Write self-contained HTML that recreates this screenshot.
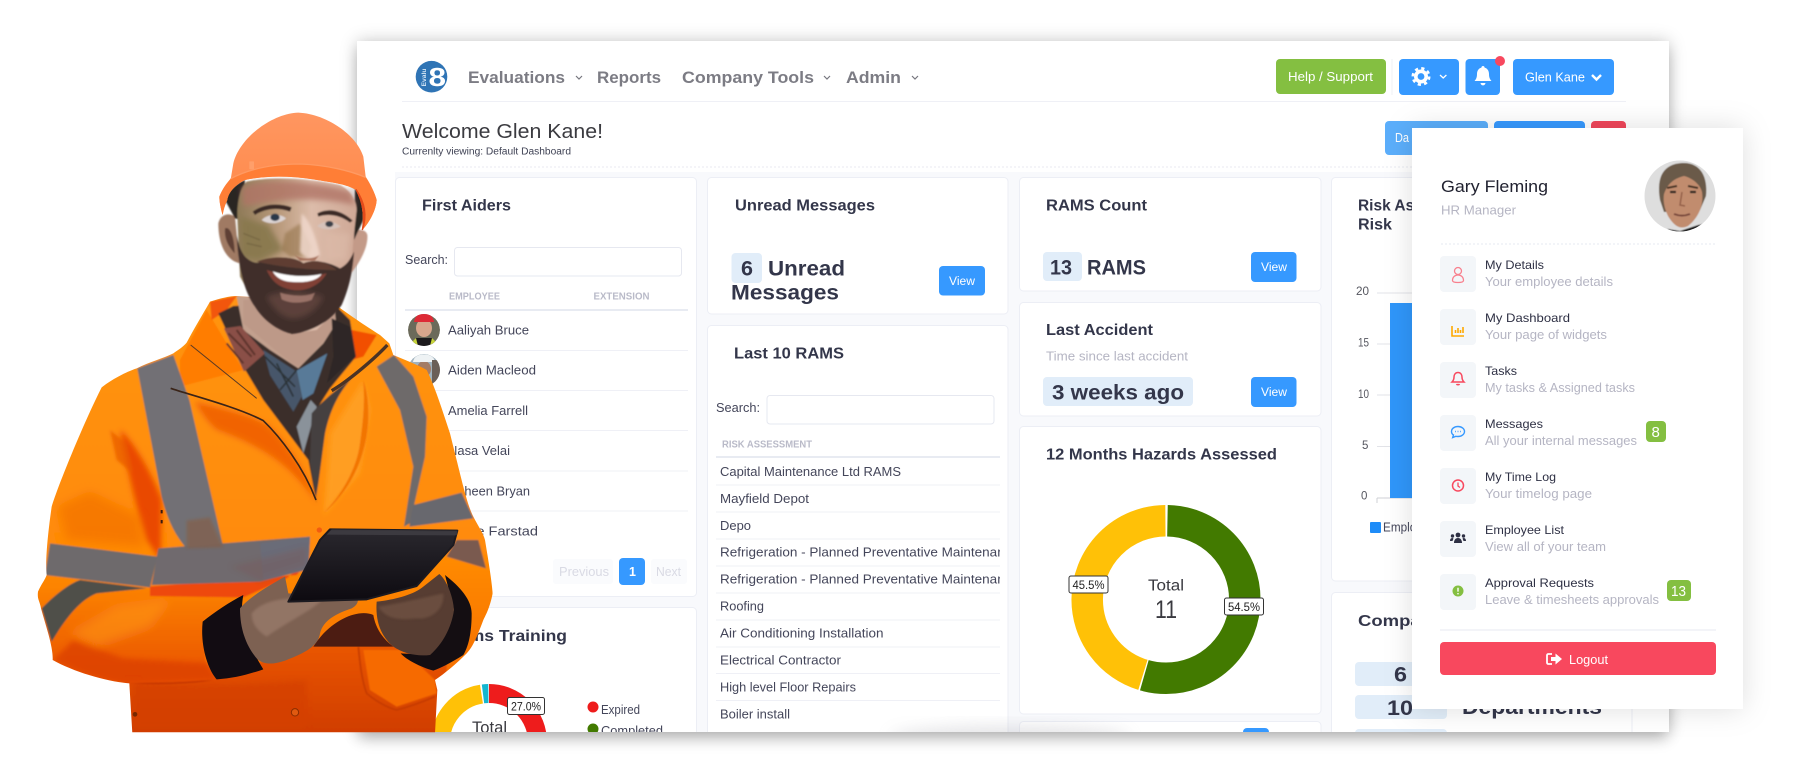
<!DOCTYPE html>
<html><head><meta charset="utf-8"><title>Evalu8</title>
<style>
html,body{margin:0;padding:0;background:#fff;width:1796px;height:774px;overflow:hidden}
#panel{position:absolute;left:357px;top:41px;width:1312px;height:691px;background:#fff;box-shadow:0 9px 14px -2px rgba(0,0,0,.2),0 0 16px rgba(0,0,0,.22)}
#s{position:absolute;left:0;top:0}
text{font-family:"Liberation Sans",sans-serif;fill:#3f4254}
.n{font-size:16.5px;font-weight:700;fill:#7c7c84}
.t{font-size:15.5px;font-weight:700;fill:#33364a}
.c{font-size:12.5px;fill:#44465a}
.th{font-size:10px;font-weight:700;fill:#b9bac8}
.b{font-size:21px;font-weight:700;fill:#33364a}
.w{font-size:12.5px;fill:#fff}
.pt{font-size:12px;fill:#2e3044}
.ps{font-size:12.5px;fill:#b5b5c3}
.l{stroke:#eff0f6;stroke-width:1;fill:none}
.card{fill:#fff;stroke:#eceef5;stroke-width:1}
.tip{fill:#fff;stroke:#333;stroke-width:1}
</style></head><body>
<div id="panel"></div>
<svg id="s" width="1796" height="774" viewBox="0 0 1796 774" xmlns="http://www.w3.org/2000/svg">
<defs>
<clipPath id="pc"><rect x="357" y="41" width="1312" height="691"/></clipPath>
<clipPath id="rc"><rect x="716" y="440" width="284" height="292"/></clipPath>
<clipPath id="gc"><circle cx="1680" cy="196" r="35.5"/></clipPath>
<clipPath id="a1"><circle cx="424" cy="330" r="16"/></clipPath>
<clipPath id="a2"><circle cx="424" cy="370" r="16"/></clipPath>
<clipPath id="manc"><rect x="0" y="0" width="600" height="732.3"/></clipPath>
<clipPath id="silc"><path d="M307 1300L298 1150C230 1145 130 1115 68 1080 70 1040 45 970 33 925 30 905 20 895 24 875 35 850 45 840 50 825 45 780 55 690 65 620 90 540 170 350 215 262 250 235 290 215 320 205 360 185 400 175 430 160 445 150 460 140 470 128 490 90 520 40 540 5 570-5 600-12 620-12L905 5C950 40 1010 80 1050 105L1078 130 1090 165C1125 180 1165 195 1190 210 1215 260 1240 340 1260 400 1275 460 1290 520 1300 560 1310 600 1320 630 1330 650 1345 680 1360 700 1365 720 1375 780 1385 840 1388 880 1380 920 1370 940 1360 960 1345 1000 1330 1040 1310 1060 1280 1090 1245 1120 1215 1140L1222 1170 1215 1300Z"/></clipPath>
<clipPath id="headc"><path d="M55 370C60 345 85 335 105 350L115 330 470 300 500 395C505 430 480 490 450 525 440 590 400 670 290 702 200 690 130 590 110 480 80 475 55 430 55 370Z"/></clipPath>
<filter id="bl8" x="-40%" y="-40%" width="180%" height="180%"><feGaussianBlur stdDeviation="8"/></filter>
<filter id="bl14" x="-40%" y="-40%" width="180%" height="180%"><feGaussianBlur stdDeviation="14"/></filter>
<filter id="bl4" x="-40%" y="-40%" width="180%" height="180%"><feGaussianBlur stdDeviation="4"/></filter>
<filter id="bl2" x="-10%" y="-10%" width="120%" height="120%"><feGaussianBlur stdDeviation="2"/></filter>
<filter id="bl06" x="-10%" y="-10%" width="120%" height="120%"><feGaussianBlur stdDeviation=".6"/></filter>
<filter id="ps" x="-10%" y="-10%" width="125%" height="125%"><feDropShadow dx="0" dy="0" stdDeviation="14" flood-color="#000" flood-opacity=".13"/></filter>
<linearGradient id="jk" x1="0" y1="0" x2="0" y2="1"><stop offset="0" stop-color="#ff9412"/><stop offset=".6" stop-color="#ff8a06"/><stop offset="1" stop-color="#f06000"/></linearGradient>
<linearGradient id="hem" x1="0" y1="0" x2="0" y2="1"><stop offset="0" stop-color="#ea5600"/><stop offset="1" stop-color="#cf3c00"/></linearGradient>
<linearGradient id="arm" x1="0" y1="0" x2="0" y2="1"><stop offset="0" stop-color="#fb8006"/><stop offset="1" stop-color="#e85000"/></linearGradient>
<linearGradient id="tab" x1="0" y1="0" x2="0" y2="1"><stop offset="0" stop-color="#2a282e"/><stop offset="1" stop-color="#0d0a10"/></linearGradient>
<linearGradient id="hel" x1="0" y1="0" x2="0" y2="1"><stop offset="0" stop-color="#ff9660"/><stop offset="1" stop-color="#ff8745"/></linearGradient>
<linearGradient id="fc" x1="0" y1="0" x2="1" y2="0"><stop offset="0" stop-color="#8e7a58"/><stop offset=".35" stop-color="#b99a7c"/><stop offset=".62" stop-color="#dcbcaa"/><stop offset="1" stop-color="#cfa896"/></linearGradient>
</defs>

<g clip-path="url(#pc)">
<rect x="395" y="172" width="1237" height="560" fill="#f8f9fc"/>
<!-- header -->
<circle cx="431.5" cy="76.7" r="15.8" fill="#2f74b5"/>
<text x="0" y="0" transform="translate(426,86.500) rotate(-90)" style="font-size:6.500px;font-weight:700;fill:#d5e6f5" textLength="18" lengthAdjust="spacingAndGlyphs">Evalu</text>
<text x="428.500" y="86" style="font-size:26px;font-weight:700;fill:#fff" textLength="17.500" lengthAdjust="spacingAndGlyphs">8</text>
<text class="n" x="468" y="83" textLength="97" lengthAdjust="spacingAndGlyphs">Evaluations</text>
<text class="n" x="597" y="83" textLength="64" lengthAdjust="spacingAndGlyphs">Reports</text>
<text class="n" x="682" y="83" textLength="132" lengthAdjust="spacingAndGlyphs">Company Tools</text>
<text class="n" x="846" y="83" textLength="55" lengthAdjust="spacingAndGlyphs">Admin</text>
<g fill="none" stroke="#76767e" stroke-width="1.2"><path d="M576 76l3 3 3-3"/><path d="M824 76l3 3 3-3"/><path d="M912 76l3 3 3-3"/></g>
<rect x="1276" y="59" width="110" height="35" rx="4" fill="#84bf41"/>
<text class="w" x="1288" y="81" textLength="85" lengthAdjust="spacingAndGlyphs">Help / Support</text>
<path d="M1392 59v36" stroke="#eff0f6"/>
<rect x="1399" y="59" width="60" height="36" rx="4" fill="#3699ff"/>
<circle cx="1421" cy="76.5" r="5.2" fill="none" stroke="#fff" stroke-width="3.6"/>
<circle cx="1421" cy="76.5" r="8.2" fill="none" stroke="#fff" stroke-width="2.6" stroke-dasharray="3.2 3.24"/>
<path d="M1440 75l3.2 3 3.2-3" fill="none" stroke="#fff" stroke-width="1.3"/>
<rect x="1465.5" y="59" width="34.5" height="36" rx="4" fill="#3699ff"/>
<path d="M1483 66c-1 0-1.600.7-1.600 1.600-3 .8-4.400 3.400-4.400 6.400 0 4-1.300 5.600-2.500 7h17c-1.200-1.400-2.500-3-2.500-7 0-3-1.400-5.600-4.400-6.400 0-.9-.6-1.600-1.600-1.600zM1480.500 83c.2 1.400 1.200 2.400 2.500 2.400s2.300-1 2.500-2.400z" fill="#fff"/>
<circle cx="1500" cy="61" r="5" fill="#f8485e"/>
<rect x="1513" y="59" width="101" height="36" rx="4" fill="#3699ff"/>
<text class="w" x="1525" y="81.500" textLength="60" lengthAdjust="spacingAndGlyphs">Glen Kane</text>
<path d="M1592 75l4.500 4.500 4.500-4.500" fill="none" stroke="#fff" stroke-width="2.400"/>
<path d="M402 101.500h1224" stroke="#eff0f6"/>
<text x="402" y="138" style="font-size:20.5px;fill:#3b3b40" textLength="201" lengthAdjust="spacingAndGlyphs">Welcome Glen Kane!</text>
<text x="402" y="154.500" style="font-size:10px;fill:#3f4254" textLength="169" lengthAdjust="spacingAndGlyphs">Currenlty viewing: Default Dashboard</text>
<path d="M402 167h1224" stroke="#e8eaf1" stroke-dasharray="2 2"/>
<rect x="1385" y="121" width="103" height="34" rx="4" fill="#5baefb"/>
<text class="w" x="1395" y="142" style="font-size:12.500px" textLength="14" lengthAdjust="spacingAndGlyphs">Da</text>
<rect x="1494" y="121" width="91" height="34" rx="4" fill="#3699ff"/>
<rect x="1591" y="121" width="35" height="34" rx="4" fill="#f0465a"/>

<!-- col 1 -->
<rect class="card" x="395.500" y="177.500" width="301" height="419" rx="4"/>
<text class="t" x="422" y="210.500" textLength="89" lengthAdjust="spacingAndGlyphs">First Aiders</text>
<text class="c" x="405" y="264" textLength="43" lengthAdjust="spacingAndGlyphs">Search:</text>
<rect x="454.500" y="247.500" width="227" height="28.500" rx="3" fill="#fff" stroke="#e6e8f0"/>
<text class="th" x="449" y="299.500" textLength="51" lengthAdjust="spacingAndGlyphs">EMPLOYEE</text>
<text class="th" x="593.500" y="299.500" textLength="56" lengthAdjust="spacingAndGlyphs">EXTENSION</text>
<path d="M405 310h283" stroke="#e8ebf2" stroke-width="2"/>
<path class="l" d="M405 350.500h283M405 390.500h283M405 430.500h283M405 471h283M405 511h283"/>
<g clip-path="url(#a1)"><circle cx="424" cy="330" r="16" fill="#6b6a5a"/><ellipse cx="424" cy="328" rx="8" ry="9" fill="#d8a68c"/><path d="M414 322c1-7 6-8.500 10-8.500s9 1.500 10 8.500z" fill="#dd2a35"/><path d="M410 346l6-8h16l6 8z" fill="#1c1a1c"/><path d="M408 346l8-8 2 8zM440 346l-8-8-2 8z" fill="#c7d43a"/></g>
<g clip-path="url(#a2)"><circle cx="424" cy="370" r="16" fill="#9fb1bd"/><ellipse cx="424" cy="369" rx="7" ry="8" fill="#a47c66"/><path d="M413 362c1-6 6-7.500 11-7.500s10 1.500 11 7.500z" fill="#eef2f4"/><rect x="432" y="360" width="8" height="26" fill="#6a5f58"/></g>
<text class="c" x="448" y="334.500" textLength="81" lengthAdjust="spacingAndGlyphs">Aaliyah Bruce</text>
<text class="c" x="448" y="374.500" textLength="88" lengthAdjust="spacingAndGlyphs">Aiden Macleod</text>
<text class="c" x="448" y="415" textLength="80" lengthAdjust="spacingAndGlyphs">Amelia Farrell</text>
<text class="c" x="448" y="455" textLength="62" lengthAdjust="spacingAndGlyphs">Nasa Velai</text>
<text class="c" x="448" y="495.500" textLength="82" lengthAdjust="spacingAndGlyphs">Raheen Bryan</text>
<text class="c" x="448" y="535.500" textLength="90" lengthAdjust="spacingAndGlyphs">Marie Farstad</text>
<rect x="553" y="559" width="60" height="25" rx="3" fill="#fafbfd"/><rect x="651" y="559" width="36" height="25" rx="3" fill="#fafbfd"/>
<text x="559" y="576" style="font-size:12.500px;fill:#d9dae4" textLength="50" lengthAdjust="spacingAndGlyphs">Previous</text>
<rect x="619" y="558" width="26" height="27" rx="4" fill="#3699ff"/>
<text x="629" y="576" style="font-size:12.500px;font-weight:700;fill:#fff">1</text>
<text x="656" y="576" style="font-size:12.500px;fill:#d9dae4" textLength="25" lengthAdjust="spacingAndGlyphs">Next</text>

<rect class="card" x="395.500" y="607.500" width="301" height="140" rx="4"/>
<text class="t" x="422" y="641" textLength="145" lengthAdjust="spacingAndGlyphs">Systems Training</text>
<g fill="none" stroke-width="19" transform="rotate(-90 489 742)">
<circle cx="489" cy="742" r="48.500" pathLength="100" stroke="#ee1c1c" stroke-dasharray="27 73"/>
<circle cx="489" cy="742" r="48.500" pathLength="100" stroke="#427a00" stroke-dasharray="28 72" stroke-dashoffset="-27.200"/>
<circle cx="489" cy="742" r="48.500" pathLength="100" stroke="#ffc107" stroke-dasharray="42 58" stroke-dashoffset="-55.500"/>
<circle cx="489" cy="742" r="48.500" pathLength="100" stroke="#14b6d0" stroke-dasharray="1.800 98.200" stroke-dashoffset="-98"/>
</g>
<text x="472" y="733" style="font-size:16.500px;fill:#3a3a40" textLength="35" lengthAdjust="spacingAndGlyphs">Total</text>
<rect class="tip" x="507.500" y="697.500" width="37" height="17" rx="2"/>
<text x="511" y="710.500" style="font-size:12px;fill:#222" textLength="30" lengthAdjust="spacingAndGlyphs">27.0%</text>
<circle cx="593" cy="707" r="5.500" fill="#ee1c1c"/>
<text class="c" x="601" y="714" textLength="39" lengthAdjust="spacingAndGlyphs">Expired</text>
<circle cx="593" cy="729" r="5.500" fill="#427a00"/>
<text class="c" x="601" y="735" textLength="62" lengthAdjust="spacingAndGlyphs">Completed</text>

<!-- col 2 -->
<rect class="card" x="707.500" y="177.500" width="300.500" height="136.500" rx="4"/>
<text class="t" x="735" y="210.500" textLength="140" lengthAdjust="spacingAndGlyphs">Unread Messages</text>
<rect x="731.500" y="253" width="30.500" height="30" rx="4" fill="#e1edf9"/>
<text class="b" x="741" y="275.500" textLength="12" lengthAdjust="spacingAndGlyphs">6</text>
<text class="b" x="768" y="275.500" textLength="77" lengthAdjust="spacingAndGlyphs">Unread</text>
<text class="b" x="731" y="299.500" textLength="108" lengthAdjust="spacingAndGlyphs">Messages</text>
<rect x="939" y="266" width="46" height="29.500" rx="4" fill="#3699ff"/>
<text class="w" x="949" y="285" style="font-size:11.500px" textLength="26" lengthAdjust="spacingAndGlyphs">View</text>

<rect class="card" x="707.500" y="325.500" width="300.500" height="420" rx="4"/>
<text class="t" x="734" y="358.500" textLength="110" lengthAdjust="spacingAndGlyphs">Last 10 RAMS</text>
<text class="c" x="716" y="412" textLength="44" lengthAdjust="spacingAndGlyphs">Search:</text>
<rect x="767" y="395.500" width="227" height="28.500" rx="3" fill="#fff" stroke="#e6e8f0"/>
<text class="th" x="722" y="447.500" textLength="90" lengthAdjust="spacingAndGlyphs">RISK ASSESSMENT</text>
<path d="M716 457h284" stroke="#e8ebf2" stroke-width="2"/>
<path class="l" d="M716 485h284M716 512h284M716 539h284M716 566h284M716 593h284M716 620h284M716 647h284M716 673.500h284M716 700.500h284"/>
<g clip-path="url(#rc)">
<text class="c" x="720" y="476" textLength="181" lengthAdjust="spacingAndGlyphs">Capital Maintenance Ltd RAMS</text>
<text class="c" x="720" y="503" textLength="89" lengthAdjust="spacingAndGlyphs">Mayfield Depot</text>
<text class="c" x="720" y="530" textLength="31" lengthAdjust="spacingAndGlyphs">Depo</text>
<text class="c" x="720" y="556.500" textLength="299" lengthAdjust="spacingAndGlyphs">Refrigeration - Planned Preventative Maintenance</text>
<text class="c" x="720" y="583.500" textLength="299" lengthAdjust="spacingAndGlyphs">Refrigeration - Planned Preventative Maintenance</text>
<text class="c" x="720" y="610.500" textLength="44" lengthAdjust="spacingAndGlyphs">Roofing</text>
<text class="c" x="720" y="637.500" textLength="163.500" lengthAdjust="spacingAndGlyphs">Air Conditioning Installation</text>
<text class="c" x="720" y="664.500" textLength="121" lengthAdjust="spacingAndGlyphs">Electrical Contractor</text>
<text class="c" x="720" y="691.500" textLength="136" lengthAdjust="spacingAndGlyphs">High level Floor Repairs</text>
<text class="c" x="720" y="718.500" textLength="70" lengthAdjust="spacingAndGlyphs">Boiler install</text>
</g>

<!-- col 3 -->
<rect class="card" x="1019.500" y="177.500" width="301.500" height="113.500" rx="4"/>
<text class="t" x="1046" y="210.500" textLength="101" lengthAdjust="spacingAndGlyphs">RAMS Count</text>
<rect x="1043" y="252" width="39" height="29" rx="4" fill="#e1edf9"/>
<text class="b" x="1050" y="274.500" textLength="22" lengthAdjust="spacingAndGlyphs">13</text>
<text class="b" x="1087" y="274.500" textLength="59" lengthAdjust="spacingAndGlyphs">RAMS</text>
<rect x="1251" y="252" width="45.500" height="30" rx="4" fill="#3699ff"/>
<text class="w" x="1261" y="271" style="font-size:11.500px" textLength="26" lengthAdjust="spacingAndGlyphs">View</text>

<rect class="card" x="1019.500" y="302.500" width="301.500" height="113.500" rx="4"/>
<text class="t" x="1046" y="335" textLength="107" lengthAdjust="spacingAndGlyphs">Last Accident</text>
<text x="1046" y="360.500" style="font-size:12.500px;fill:#b5b5c3" textLength="142" lengthAdjust="spacingAndGlyphs">Time since last accident</text>
<rect x="1043" y="377" width="150" height="29" rx="4" fill="#e1edf9"/>
<text class="b" x="1052" y="399.500" textLength="132" lengthAdjust="spacingAndGlyphs">3 weeks ago</text>
<rect x="1251" y="377" width="45.500" height="30" rx="4" fill="#3699ff"/>
<text class="w" x="1261" y="396" style="font-size:11.500px" textLength="26" lengthAdjust="spacingAndGlyphs">View</text>

<rect class="card" x="1019.500" y="426.500" width="301.500" height="287.500" rx="4"/>
<text class="t" x="1046" y="459.500" textLength="231" lengthAdjust="spacingAndGlyphs">12 Months Hazards Assessed</text>
<g fill="none" stroke-width="31.500" transform="rotate(-90 1166 599.500)">
<circle cx="1166" cy="599.500" r="78.800" pathLength="100" stroke="#427a00" stroke-dasharray="54.200 45.800" stroke-dashoffset="-.3"/>
<circle cx="1166" cy="599.500" r="78.800" pathLength="100" stroke="#ffc107" stroke-dasharray="45.200 54.800" stroke-dashoffset="-54.800"/>
</g>
<text x="1148" y="590.500" style="font-size:15.500px;fill:#3a3a40" textLength="36" lengthAdjust="spacingAndGlyphs">Total</text>
<text x="1155" y="618" style="font-size:25px;fill:#3a3a40" textLength="22" lengthAdjust="spacingAndGlyphs">11</text>
<rect class="tip" x="1069" y="576" width="39" height="17" rx="2"/>
<text x="1072.500" y="589" style="font-size:12px;fill:#222" textLength="32" lengthAdjust="spacingAndGlyphs">45.5%</text>
<rect class="tip" x="1224.500" y="598" width="39" height="17" rx="2"/>
<text x="1228" y="611" style="font-size:12px;fill:#222" textLength="32" lengthAdjust="spacingAndGlyphs">54.5%</text>
<rect class="card" x="1019.500" y="721.500" width="301.500" height="30" rx="4"/>
<rect x="1243" y="728" width="26" height="20" rx="4" fill="#3699ff"/>
<ellipse cx="1010" cy="738" rx="120" ry="12" fill="#a8a8b0" opacity=".3" filter="url(#bl8)"/>

<!-- col 4 -->
<rect class="card" x="1331.500" y="177.500" width="300.500" height="403.500" rx="4"/>
<text class="t" x="1358" y="210.500" textLength="150" lengthAdjust="spacingAndGlyphs">Risk Assessment by</text>
<text class="t" x="1358" y="229.500" textLength="34" lengthAdjust="spacingAndGlyphs">Risk</text>
<g style="font-size:11.500px">
<text x="1356" y="295" style="fill:#55565f" textLength="13" lengthAdjust="spacingAndGlyphs">20</text>
<text x="1358" y="346.500" style="fill:#55565f" textLength="11" lengthAdjust="spacingAndGlyphs">15</text>
<text x="1358" y="398" style="fill:#55565f" textLength="11" lengthAdjust="spacingAndGlyphs">10</text>
<text x="1362" y="449" style="fill:#55565f">5</text>
<text x="1361" y="499.500" style="fill:#55565f">0</text>
</g>
<path d="M1377 293h60M1377 344h60M1377 395h60M1377 446.500h60" stroke="#e2e3e8"/>
<path d="M1377 498h60M1377 498v5" stroke="#cfd0d6"/>
<rect x="1390" y="303" width="50" height="195" fill="#2f96fa"/>
<rect x="1370" y="522" width="11" height="11" rx="1" fill="#1e8cf8"/>
<text class="c" x="1383" y="531.500" textLength="58" lengthAdjust="spacingAndGlyphs">Employees</text>

<rect class="card" x="1331.500" y="592.500" width="300.500" height="160" rx="4"/>
<text class="t" x="1358" y="626" textLength="150" lengthAdjust="spacingAndGlyphs">Company Details</text>
<rect x="1355" y="662" width="92" height="24" rx="4" fill="#e1edf9"/>
<rect x="1355" y="695" width="92" height="24" rx="4" fill="#e1edf9"/>
<rect x="1355" y="729" width="92" height="24" rx="4" fill="#e1edf9"/>
<text class="b" x="1394" y="681.500" textLength="13" lengthAdjust="spacingAndGlyphs">6</text>
<text class="b" x="1387" y="715" textLength="26" lengthAdjust="spacingAndGlyphs">10</text>
<text class="b" x="1462" y="714" textLength="140" lengthAdjust="spacingAndGlyphs">Departments</text>
</g>

<!-- popup -->
<rect x="1412" y="128" width="331" height="581" fill="#fff" filter="url(#ps)"/>
<text x="1441" y="192" style="font-size:16.500px;fill:#212230" textLength="107" lengthAdjust="spacingAndGlyphs">Gary Fleming</text>
<text x="1441" y="214.500" style="font-size:12.500px;fill:#b5b5c3" textLength="75" lengthAdjust="spacingAndGlyphs">HR Manager</text>
<g clip-path="url(#gc)"><g filter="url(#bl06)">
<rect x="1640" y="155" width="80" height="80" fill="#dedede"/>
<path d="M1660 200C1656 176 1664 164 1682 163 1700 162 1708 176 1706 196L1700 210 1664 212z" fill="#6a5a48"/>
<path d="M1664 194C1668 182 1676 178 1684 176 1692 178 1700 184 1702 192 1704 206 1698 218 1688 226 1680 230 1674 226 1668 216 1664 208 1663 200 1664 194Z" fill="#c18c6e"/>
<path d="M1667 188l10-2M1688 186l10 2" stroke="#4a3428" stroke-width="2"/>
<path d="M1670 192h6M1690 192h6" stroke="#2e2620" stroke-width="2.200"/>
<path d="M1682 192l-2 13 5 1" fill="none" stroke="#94604a" stroke-width="1.500"/>
<path d="M1674 214c5 2 11 2 16 0" stroke="#7a4a3c" stroke-width="2" fill="none"/>
<path d="M1660 235l8-6 12 2 18-6 10-2 4 12z" fill="#1f1c1a"/>
</g></g>
<path d="M1441 244h275" stroke="#e6e8f0" stroke-dasharray="2 2"/>
<g fill="#f3f6f9">
<rect x="1440" y="256" width="36" height="36" rx="4"/><rect x="1440" y="309" width="36" height="36" rx="4"/><rect x="1440" y="362" width="36" height="36" rx="4"/><rect x="1440" y="415" width="36" height="36" rx="4"/><rect x="1440" y="468" width="36" height="36" rx="4"/><rect x="1440" y="521" width="36" height="36" rx="4"/><rect x="1440" y="574" width="36" height="36" rx="4"/>
</g>
<g fill="none" stroke="#f8808e" stroke-width="1.300"><circle cx="1458" cy="271" r="3.500"/><path d="M1452.500 280.500c0-3.500 2.500-5.500 5.500-5.500s5.500 2 5.500 5.500c0 1.500-2 2-5.500 2s-5.500-.5-5.500-2z"/></g>
<path d="M1452 326v10h12M1455.500 333v-3M1458 333v-5M1460.500 333v-3M1463 333v-6" fill="none" stroke="#ffa800" stroke-width="1.600"/>
<path d="M1458 372.500c-2.500 0-4 2-4 4.500 0 3-1 4-2 5h12c-1-1-2-2-2-5 0-2.500-1.500-4.500-4-4.500zM1456.500 384c.5 1 2.500 1 3 0" fill="none" stroke="#f8485e" stroke-width="1.500"/>
<path d="M1458 426.500c-3.500 0-6.500 2-6.500 5 0 1.500.8 2.800 2 3.500l-.8 2.500 3-1.200c.8.2 1.500.2 2.300.2 3.500 0 6.500-2.200 6.500-5s-3-5-6.500-5z" fill="none" stroke="#3699ff" stroke-width="1.400"/>
<path d="M1455 431.500h.8M1457.600 431.500h.8M1460.200 431.500h.8" stroke="#3699ff" stroke-width="1.400"/>
<circle cx="1458" cy="485.500" r="5.500" fill="none" stroke="#f8485e" stroke-width="1.500"/><path d="M1458 482.500v3.500l2 1.500" fill="none" stroke="#f8485e" stroke-width="1.300"/>
<g fill="#2e3044"><circle cx="1458" cy="535" r="2.400"/><circle cx="1452.500" cy="536" r="1.700"/><circle cx="1463.500" cy="536" r="1.700"/><path d="M1454 543c0-3 1.500-5 4-5s4 2 4 5zM1450 541c0-2 1-3 2.500-3l1 .5-1 2.500zM1466 541c0-2-1-3-2.500-3l-1 .5 1 2.500z"/></g>
<circle cx="1458" cy="591" r="5.500" fill="#84bf41"/><path d="M1458 587.800v3.800M1458 593v1.400" stroke="#fff" stroke-width="1.400"/>
<text class="pt" x="1485" y="269" textLength="59" lengthAdjust="spacingAndGlyphs">My Details</text>
<text class="ps" x="1485" y="286" textLength="128" lengthAdjust="spacingAndGlyphs">Your employee details</text>
<text class="pt" x="1485" y="322" textLength="85" lengthAdjust="spacingAndGlyphs">My Dashboard</text>
<text class="ps" x="1485" y="339" textLength="122" lengthAdjust="spacingAndGlyphs">Your page of widgets</text>
<text class="pt" x="1485" y="375" textLength="32" lengthAdjust="spacingAndGlyphs">Tasks</text>
<text class="ps" x="1485" y="392" textLength="150" lengthAdjust="spacingAndGlyphs">My tasks &amp; Assigned tasks</text>
<text class="pt" x="1485" y="428" textLength="58" lengthAdjust="spacingAndGlyphs">Messages</text>
<text class="ps" x="1485" y="445" textLength="152" lengthAdjust="spacingAndGlyphs">All your internal messages</text>
<text class="pt" x="1485" y="481" textLength="71" lengthAdjust="spacingAndGlyphs">My Time Log</text>
<text class="ps" x="1485" y="498" textLength="107" lengthAdjust="spacingAndGlyphs">Your timelog page</text>
<text class="pt" x="1485" y="534" textLength="79" lengthAdjust="spacingAndGlyphs">Employee List</text>
<text class="ps" x="1485" y="551" textLength="121" lengthAdjust="spacingAndGlyphs">View all of your team</text>
<text class="pt" x="1485" y="587" textLength="109" lengthAdjust="spacingAndGlyphs">Approval Requests</text>
<text class="ps" x="1485" y="604" textLength="174" lengthAdjust="spacingAndGlyphs">Leave &amp; timesheets approvals</text>
<rect x="1646" y="421" width="20" height="21" rx="4" fill="#84bf41"/>
<text x="1651.500" y="437" style="font-size:15px;fill:#fff">8</text>
<rect x="1667" y="580" width="24" height="21" rx="4" fill="#84bf41"/>
<text x="1671" y="596" style="font-size:15px;fill:#fff" textLength="15" lengthAdjust="spacingAndGlyphs">13</text>
<path d="M1440 630h276" stroke="#eff0f6" stroke-width="1.500"/>
<rect x="1440" y="642" width="276" height="33" rx="4" fill="#f8485e"/>
<path d="M1552 654h-3.500c-1 0-1.500.6-1.500 1.500v7c0 1 .5 1.500 1.500 1.500h3.500" fill="none" stroke="#fff" stroke-width="1.800"/>
<path d="M1551 657h4.500v-3.500l6.500 5.500-6.500 5.500v-3.500h-4.500z" fill="#fff"/>
<text x="1569" y="664" style="font-size:12.500px;fill:#fff" textLength="39" lengthAdjust="spacingAndGlyphs">Logout</text>

<!-- man -->
<g clip-path="url(#manc)">
<g transform="translate(30,300) scale(.33333)">
<g clip-path="url(#silc)">
<g filter="url(#bl2)">
<rect x="0" y="-20" width="1410" height="1330" fill="url(#jk)"/>
<!-- hem -->
<path d="M280 1130L560 1130 860 1030 1250 1030 1250 1310 280 1310z" fill="url(#hem)"/>
<path d="M1000 1050L1120 1050 1215 1140 1220 1180 1100 1220 1020 1170z" fill="#f66a02"/>
<path d="M985 1040C990 1090 995 1140 1010 1180 1040 1205 1070 1222 1100 1230 1140 1220 1180 1205 1215 1190" fill="none" stroke="#c43a00" stroke-width="5"/>
<path d="M310 1150C500 1160 700 1150 830 1140L830 1290 310 1290z" fill="#d44000" opacity=".7" filter="url(#bl8)"/>
<path d="M298 1148C420 1155 530 1145 560 1135" fill="none" stroke="#b83000" stroke-width="4"/>
<!-- forearm -->
<path d="M10 870L350 870 640 880 520 960 525 1080 560 1140 298 1150 180 1135 50 1090z" fill="url(#arm)"/>
<path d="M70 1080C130 1115 230 1145 298 1150L560 1138 530 1090 280 1075 130 1020z" fill="#dc3f00" opacity=".8" filter="url(#bl8)"/>
<path d="M120 1000L260 920 420 900 360 980 200 1040z" fill="#ff9a14" opacity=".5" filter="url(#bl14)"/>
<path d="M360 860L800 825 840 775 770 835 640 892 360 888z" fill="#ee4a08"/>
<!-- shading -->
<path d="M270 390C310 420 370 530 395 600L392 780 350 720C320 630 290 500 270 390Z" fill="#e63c00" opacity=".85" filter="url(#bl8)"/>
<path d="M85 620L180 575 330 650 340 740 110 720z" fill="#f06a00" opacity=".55" filter="url(#bl14)"/>
<path d="M240 390L290 430 310 520 260 480z" fill="#e85800" opacity=".7" filter="url(#bl4)"/>
<path d="M495 305C600 330 680 350 720 380 780 440 830 520 860 610 790 500 700 440 560 390 530 365 510 335 495 305Z" fill="#e84800" opacity=".6" filter="url(#bl8)"/>
<path d="M1000 240L1020 330 990 520 880 650 900 400z" fill="#ffa52a" opacity=".7" filter="url(#bl8)"/>
<path d="M1000 240C1020 300 1020 380 1000 450 980 530 930 600 880 640 930 590 980 510 990 430 1000 360 1005 300 1000 240Z" fill="#ef6a00" opacity=".8"/>
<path d="M940 85L1040 105 1000 170 930 190z" fill="#f25000"/>
<path d="M450 180L530 30 590 130 640 210 450 260z" fill="#ff7d02"/>
<path d="M540 5L620-12 590 30 545 60z" fill="#f2560a"/>
<!-- neck / shirt -->
<path d="M565 40L610 18 905 5 960 60 978 170 900 265 852 340 852 540 860 610 835 480 700 300 640 200z" fill="#3a2e2c"/>
<path d="M620-12L912 0 918 70 880 130 805 205 720 150 640 90z" fill="#c2a08e"/>
<path d="M640 70C700 120 780 190 805 200 840 170 890 120 915 70L915 0 640 0z" fill="#b99583" opacity=".6"/>
<path d="M582 85L632 78 705 160 642 215z" fill="#8a5046"/>
<path d="M595 100l70 70M620 90l55 75M590 130l50 60" stroke="#5c322c" stroke-width="6"/>
<path d="M700 150L800 215 815 290 790 335 720 225z" fill="#46566a"/>
<path d="M705 170l90 90M740 190l50 100M750 270l50-60" stroke="#2a3036" stroke-width="5"/>
<path d="M800 212L892 160 850 280 818 300z" fill="#587a98"/>
<path d="M800 380L842 300 860 320 820 460z" fill="#8a929a"/>
<path d="M905 55L960 80 975 170 890 250 910 170z" fill="#2d2826"/>
<path d="M845 340C880 300 930 260 965 235 925 280 900 330 885 400 875 470 868 540 858 590L840 490z" fill="#454040"/>
<!-- stripes -->
<path d="M322 205L430 165 478 300 580 742 470 746C430 700 410 650 395 590z" fill="#727074"/>
<path d="M385 745L840 710 835 808 690 845 365 855z" fill="#6f6a6e"/>
<path d="M690 730L840 710 835 808 700 840z" fill="#6a6c78"/>
<path d="M60 730L382 770 360 862 45 825z" fill="#6e6a6c"/>
<path d="M35 925C80 880 120 850 150 840L350 865 200 880C150 900 110 950 65 1025z" fill="#4f4f4a"/>
<path d="M1040 200L1092 165 1150 230 1190 350 1185 470 1140 670 1122 680 1150 500 1110 330z" fill="#6e6a6a"/>
<path d="M1150 615L1295 578 1330 655 1138 680z" fill="#67676e"/>
<path d="M1280 720L1345 720 1368 805 1250 770z" fill="#7a5a50"/>
<path d="M470 745l110-3-40-90-70 10z" fill="#8a5a3a" opacity=".5" filter="url(#bl4)"/>
<path d="M600 800L830 740 830 800 690 845z" fill="#7a5a5a" opacity=".4" filter="url(#bl8)"/>
</g>
<!-- zips -->
<path d="M482 135L680 295" stroke="#5a3a24" stroke-width="3" fill="none"/>
<path d="M422 265C480 285 620 320 700 362 750 410 820 500 858 600" stroke="#3a2418" stroke-width="5" fill="none"/>
<path d="M1072 135C1040 170 960 240 905 272" stroke="#4a3326" stroke-width="10" fill="none"/>
<path d="M395 630v60" stroke="#3a1a10" stroke-width="6" stroke-dasharray="10 20"/>
<!-- between hands -->
<path d="M850 1040L1090 1040C1050 1010 1035 975 1030 945 985 925 900 960 850 1040Z" fill="#4c1c12"/>
<!-- cuffs -->
<path d="M518 965C555 935 600 905 640 885 628 950 640 1010 700 1108 650 1125 610 1135 560 1138 535 1110 510 1040 518 965Z" fill="#120c12"/>
<path d="M1245 825C1290 860 1325 900 1325 940 1325 1000 1315 1040 1300 1065 1260 1090 1230 1105 1210 1112 1170 1100 1130 1080 1112 1060L1200 1065 1272 930z" fill="#140e12"/>
<!-- hands -->
<path d="M630 925C660 890 720 855 765 830L775 880C840 885 920 880 975 885 990 895 985 915 965 925 920 940 880 960 870 1000 865 1040 820 1060 770 1080 730 1095 700 1095 680 1075 650 1040 630 990 630 925Z" fill="#7d6152"/>
<path d="M665 940C700 900 760 890 880 895 850 930 780 960 710 1010 680 990 665 970 665 940Z" fill="#9a7c6c" opacity=".75" filter="url(#bl4)"/>
<path d="M1040 905C1090 900 1150 885 1180 860L1228 822C1250 840 1270 890 1272 930 1265 980 1240 1030 1200 1065 1160 1070 1120 1060 1090 1040 1060 1015 1035 975 1040 905Z" fill="#573d32"/>
<path d="M1045 920C1110 910 1170 895 1240 880 1245 930 1200 960 1160 955 1110 960 1070 960 1045 920Z" fill="#6e5142" opacity=".85" filter="url(#bl4)"/>
<!-- tablet -->
<path d="M900 688L1282 692 1270 735 1160 858 1010 898 775 905 870 720z" fill="url(#tab)" stroke="#1c1a20" stroke-width="6" stroke-linejoin="round"/>
<path d="M905 688L1283 692 1280 706 890 704z" fill="#454349" opacity=".7"/>
<!-- buttons -->
<circle cx="795" cy="1237" r="11" fill="#e05a10" stroke="#8a2c00" stroke-width="3"/>
<circle cx="315" cy="1243" r="7" fill="#7a2800"/>
<circle cx="868" cy="690" r="8" fill="#f25c10"/>
</g>
</g>
<!-- head -->
<g transform="translate(200,100) scale(.33333)">
<g filter="url(#bl2)">
<path d="M55 370C60 345 85 335 105 350L118 490 105 485C75 470 55 430 55 370Z" fill="#a07a64"/>
<path d="M75 385C90 378 103 410 104 460 85 440 72 415 75 385Z" fill="#5e4034"/>
<path d="M462 395C480 385 498 390 502 405 505 440 480 490 445 530z" fill="#c39a88"/>
<path d="M75 300C85 270 110 250 135 240L125 360 105 355z" fill="#2c2624"/>
<path d="M465 265C485 290 497 320 495 350L462 420z" fill="#2c2624"/>
<!-- face -->
<path d="M112 345C112 300 122 260 140 245 200 230 320 232 420 255 450 270 470 300 470 330L460 420 452 530 420 620 350 690 270 702 175 630 120 530z" fill="url(#fc)"/>
<path d="M125 265C180 235 320 235 450 275L465 315C400 300 280 285 130 320z" fill="#b07566" opacity=".8" filter="url(#bl8)"/>
<path d="M120 350L205 375 250 450 175 485 125 470z" fill="#88784e" opacity=".9" filter="url(#bl8)"/>
<path d="M255 400L300 370 335 440 325 470 270 470 245 450z" fill="#8a6a3c" opacity=".5" filter="url(#bl4)"/>
<path d="M305 340C330 360 350 420 360 465 345 480 315 480 300 455z" fill="#f0d8cc" opacity=".85" filter="url(#bl4)"/>
<path d="M280 462C300 480 340 478 358 465L345 482 300 482z" fill="#9a5e48" opacity=".8"/>
<path d="M375 400L450 400 440 480 380 480z" fill="#dcbaa8" opacity=".7" filter="url(#bl8)"/>
<!-- brows / eyes -->
<path d="M158 335C190 310 240 308 275 322L270 335C235 322 195 325 165 345z" fill="#3a2a26"/>
<path d="M352 340C385 322 425 330 458 362L450 368C420 345 385 340 355 350z" fill="#3a2a26"/>
<path d="M185 360C205 340 240 340 258 355 240 372 205 375 185 360z" fill="#dcd4d4"/>
<ellipse cx="225" cy="352" rx="14" ry="11" fill="#2c3848"/>
<path d="M352 378C370 360 400 360 422 380 400 390 370 392 352 378z" fill="#d6c2ba"/>
<ellipse cx="388" cy="372" rx="12" ry="9" fill="#3a3f48"/>
<path d="M130 400l50 20M140 430l45 10" stroke="#6a5a3a" stroke-width="4" opacity=".6"/>
<!-- beard -->
<path d="M110 405C115 430 120 450 135 470 150 485 165 490 175 488 220 465 290 470 310 490 345 475 395 490 420 505 440 495 450 480 462 455 460 500 450 560 425 615 395 660 340 695 275 702 230 690 190 660 165 620 130 570 115 500 110 405Z" fill="#402e2b"/>
<path d="M200 590C240 570 320 570 370 590 350 640 300 660 270 655 240 650 215 620 200 590Z" fill="#6a4c42" opacity=".65" filter="url(#bl8)"/>
<path d="M170 485C220 465 280 470 310 490 345 475 380 485 410 510 340 510 260 505 170 485z" fill="#5e3e32"/>
<path d="M200 510C260 530 320 535 380 520 360 555 320 575 280 570 240 565 215 545 200 510z" fill="#803f36"/>
<path d="M218 514C265 530 320 532 365 522 350 545 310 548 280 546 250 545 230 535 218 514z" fill="#fff"/>
<path d="M240 578C280 590 320 590 345 578L335 600C300 612 270 610 245 598z" fill="#b5877a" opacity=".7"/>
</g>
<!-- helmet -->
<path d="M58 290C68 265 80 250 92 238L100 190C120 110 220 40 295 38 380 42 470 105 490 170L497 230C510 250 525 280 530 300 528 330 510 365 487 390 490 350 490 310 468 270 440 252 400 248 340 238 260 226 190 228 135 240 100 258 85 280 82 300 75 315 70 330 68 345 62 325 58 305 58 290Z" fill="url(#hel)"/>
<path d="M58 290C68 265 80 250 92 236 150 205 225 192 300 192 380 195 450 212 497 232 510 250 525 280 530 300 528 330 510 365 487 390 490 350 490 310 468 270 440 252 400 248 340 238 260 226 190 228 135 240 100 258 85 280 82 300 75 315 70 330 68 345 62 325 58 305 58 290Z" fill="#ff7e36"/>
<path d="M92 236C150 205 225 192 300 192 380 195 450 212 497 232" fill="none" stroke="#ff9a62" stroke-width="4"/>
<path d="M468 268C490 300 505 340 487 390 495 350 490 310 468 268Z" fill="#e44a1a" stroke="#e44a1a" stroke-width="4"/>
<rect x="148" y="184" width="14" height="24" rx="2" fill="#ff9f6a"/>
</g>
</g>
</svg>
</body></html>
